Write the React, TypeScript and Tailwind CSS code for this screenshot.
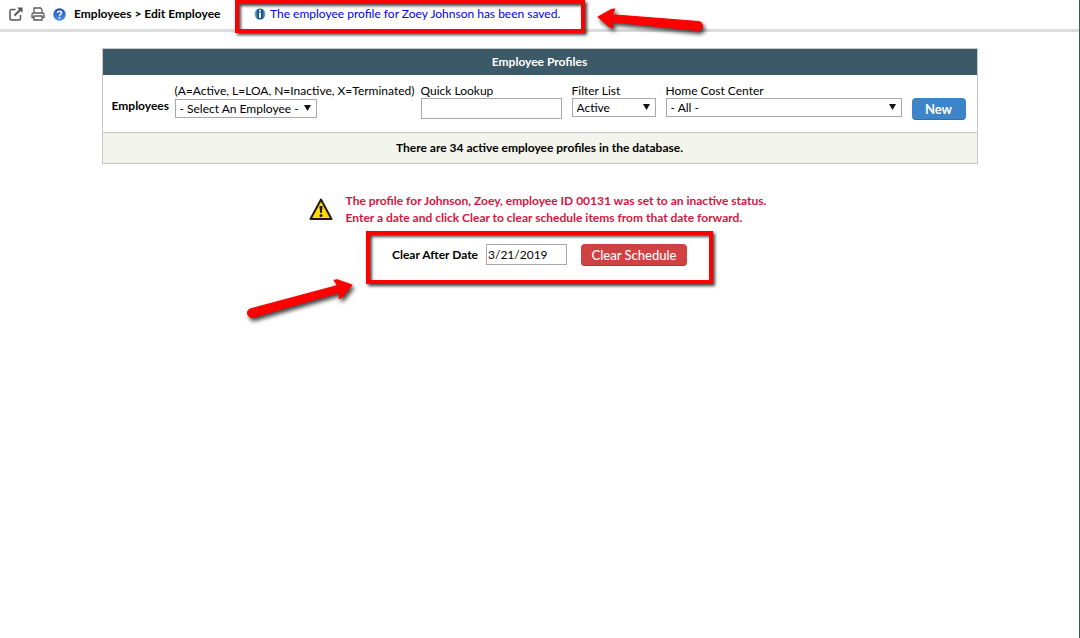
import type { ReactNode } from 'react';

function Arrow({ className, tail, tip, width, height }: { className: string; tail: [number, number]; tip: [number, number]; width: number; height: number }) {
  const dx = tip[0] - tail[0];
  const dy = tip[1] - tail[1];
  const length = Math.hypot(dx, dy);
  const angle = (Math.atan2(dy, dx) * 180) / Math.PI;
  return (
    <svg
      aria-hidden="true"
      className={`pointer-events-none absolute overflow-visible drop-shadow-[2px_3px_2px_rgba(0,0,0,0.75)] ${className}`}
      width={width}
      height={height}
      viewBox={`0 0 ${width} ${height}`}
    >
      <path
        transform={`translate(${tail[0]} ${tail[1]}) rotate(${angle})`}
        fill="#ff0000"
        stroke="#ff0000"
        strokeLinejoin="round"
        d={`M0 -4.500 L${length - 14} -3.500 L${length - 16} -9.500 L${length - 13} -9 L${length} 0 L${length - 13} 9 L${length - 16} 9.500 L${length - 14} 3.500 L0 4.500 A4.500 4.500 0 0 1 0 -4.500 Z`}
      />
    </svg>
  );
}

const highlight =
  'pointer-events-none absolute border-4 border-[#ff0000] shadow-[2px_2px_3px_rgba(0,0,0,0.75),inset_2px_2px_3px_rgba(0,0,0,0.7)]';

function ExternalIcon() {
  return (
    <svg width="14" height="14" viewBox="0 0 14 14" fill="none" stroke="#555" aria-hidden="true">
      <path d="M6.500 2.500H2.500Q1 2.500 1 4V11.500Q1 13 2.500 13H10Q11.500 13 11.500 11.500V8" strokeWidth="1.500" />
      <path d="M5.500 8.500L11 3" strokeWidth="2" />
      <path d="M8 .5H13.500V6Z" fill="#555" stroke="none" />
    </svg>
  );
}

function PrintIcon() {
  return (
    <svg width="14" height="14" viewBox="0 0 14 14" fill="none" stroke="#5a5a5a" strokeWidth="1.300" aria-hidden="true">
      <path d="M3 6V1H9.500L11 2.500V6" />
      <path d="M3 10.500H1V7.500Q1 6 2.500 6H11.500Q13 6 13 7.500V10.500H11" />
      <path d="M3 9H11V13H3Z" />
    </svg>
  );
}

function HelpIcon() {
  return (
    <svg width="13" height="13" viewBox="0 0 13 13" aria-hidden="true">
      <defs>
        <linearGradient id="help" x1="0" y1="0" x2="0" y2="1">
          <stop stopColor="#1c4fbd" />
          <stop offset="1" stopColor="#4c91ee" />
        </linearGradient>
      </defs>
      <circle cx="6.500" cy="6.500" r="6.200" fill="url(#help)" />
      <path d="M4.500 5Q4.500 3.200 6.500 3.200T8.500 4.900Q8.500 5.700 7.500 6.300T6.500 7.700" fill="none" stroke="#fff" strokeWidth="1.500" />
      <circle cx="6.500" cy="9.800" r="1" fill="#fff" />
    </svg>
  );
}

function InfoIcon() {
  return (
    <svg width="12" height="12" viewBox="0 0 12 12" aria-hidden="true">
      <defs>
        <linearGradient id="info">
          <stop stopColor="#8dbce2" />
          <stop offset=".35" stopColor="#0c4f94" />
          <stop offset=".7" stopColor="#0c4f94" />
          <stop offset="1" stopColor="#8dbce2" />
        </linearGradient>
      </defs>
      <circle cx="6" cy="6" r="5.500" fill="url(#info)" />
      <path d="M6 1.800V3.400M6 4.500V10" stroke="#fff" strokeWidth="2" />
    </svg>
  );
}

function WarningIcon() {
  return (
    <svg className="shrink-0" width="24" height="23" viewBox="0 0 24 23" role="img" aria-label="Warning">
      <path d="M12 1.500L22.500 21H1.500Z" fill="#ffdc00" stroke="#1e1b16" strokeWidth="2" strokeLinejoin="round" />
      <path d="M10.400 8H13.600L12.800 15H11.200Z" fill="#1e1b16" />
      <circle cx="12" cy="17.500" r="1.500" fill="#1e1b16" />
    </svg>
  );
}

function Select({ id, children }: { id: string; children: ReactNode }) {
  return (
    <div className="relative">
      <select id={id} className="block h-[19px] w-full appearance-none border border-[#a9a9a9] bg-white px-1 text-xs leading-4">
        {children}
      </select>
      <svg className="pointer-events-none absolute top-1.5 right-1.5" width="7" height="6" viewBox="0 0 7 6" aria-hidden="true">
        <path d="M0 0H7L3.500 6Z" fill="#111" />
      </svg>
    </div>
  );
}

export default function App() {
  return (
    <div className="min-h-screen border-r border-[#3c5967] bg-white font-['Lato','Liberation_Sans',sans-serif] text-xs leading-4 text-black">
      <header className="flex h-8 items-start border-b-[3px] border-[#dcdcdc] pt-1.5 pl-[9px]">
        <div className="flex h-4 items-center gap-2">
          <button aria-label="Open in new window"><ExternalIcon /></button>
          <button aria-label="Print"><PrintIcon /></button>
          <button aria-label="Help"><HelpIcon /></button>
          <h1 className="w-[180px] font-bold whitespace-nowrap">Employees &gt; Edit Employee</h1>
        </div>
        <div className="relative flex h-4 items-center gap-1 whitespace-nowrap text-[#0000ee]">
          <InfoIcon />
          <p role="status">The employee profile for Zoey Johnson has been saved.</p>
          <div className={`${highlight} -top-1.5 -right-[25px] -bottom-[11px] -left-[19px]`} />
          <Arrow className="-top-1.5 left-full ml-9" width={110} height={34} tail={[102, 26]} tip={[2, 17]} />
        </div>
      </header>

      <main className="pt-4">
        <section className="mx-auto w-full max-w-[876px] border border-[#c6c8c8]">
          <h2 className="bg-[#3c5967] py-[5px] text-center font-bold text-white">Employee Profiles</h2>
          <form className="flex items-start pt-2 pr-[11px] pb-3 pl-[9px]" onSubmit={(e) => e.preventDefault()}>
            <label htmlFor="employee" className="w-[63px] shrink-0 pt-[15px] font-bold">Employees</label>
            <div className="w-[246px]">
              <label htmlFor="employee" className="block whitespace-nowrap">(A=Active, L=LOA, N=Inactive, X=Terminated)</label>
              <div className="w-[142px]">
                <Select id="employee"><option>- Select An Employee -</option></Select>
              </div>
            </div>
            <div className="mr-2.5 w-[141px]">
              <label htmlFor="lookup" className="block h-[15px]">Quick Lookup</label>
              <input id="lookup" className="block h-[21px] w-full border border-[#a9a9a9] px-1" />
            </div>
            <div className="mr-2.5 w-[84px]">
              <label htmlFor="filter" className="block h-[15px]">Filter List</label>
              <Select id="filter"><option>Active</option></Select>
            </div>
            <div className="mr-2.5 flex-1">
              <label htmlFor="center" className="block h-[15px]">Home Cost Center</label>
              <Select id="center"><option>- All -</option></Select>
            </div>
            <button className="mt-[15px] h-[22px] w-[54px] rounded border-b border-[#3270ae] bg-[#3d85c8] text-[13px] leading-4 font-bold text-white">New</button>
          </form>
          <p className="border-t border-[#c6c8c8] bg-[#f3f5ec] py-[7px] text-center font-bold">
            There are 34 active employee profiles in the database.
          </p>
        </section>

        <section className="mt-7 flex flex-col items-center">
          <div className="flex items-center gap-[13px] pr-1 font-bold text-[#d8143f]">
            <WarningIcon />
            <p className="leading-[17px]">
              The profile for Johnson, Zoey, employee ID 00131 was set to an inactive status.
              <br />
              Enter a date and click Clear to clear schedule items from that date forward.
            </p>
          </div>
          <form className="relative mt-[5px] flex h-[53px] w-[347px] items-start pt-[13px] pl-[26px]" onSubmit={(e) => e.preventDefault()}>
            <label htmlFor="date" className="w-[94px] pt-[3px] font-bold whitespace-nowrap">Clear After Date</label>
            <input id="date" defaultValue="3/21/2019" className="h-[21px] w-[81px] border border-[#a9a9a9] px-px" />
            <button className="ml-3.5 h-[22px] w-[106px] rounded border-b border-[#b73537] bg-[#cf4143] text-[13px] leading-4 font-medium text-white">Clear Schedule</button>
            <div className={`${highlight} inset-0`} />
            <Arrow className="top-full right-full mr-3 -mt-2.5" width={110} height={46} tail={[8, 39]} tip={[108, 11]} />
          </form>
        </section>
      </main>
    </div>
  );
}
